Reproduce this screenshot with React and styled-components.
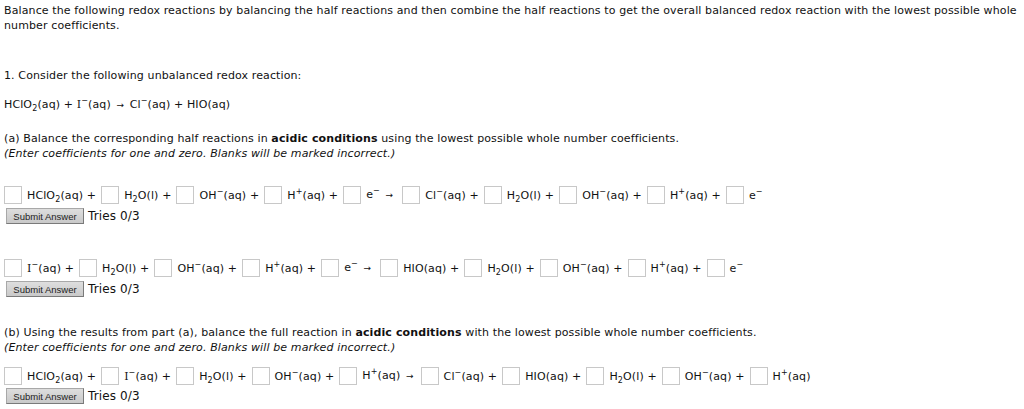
import React from 'react'
import styled, { createGlobalStyle } from 'styled-components'

const Global = createGlobalStyle`
    body {
        margin: 0;
        background: #fff;
    }
`

const Page = styled.div`
    padding: 3px 4px;
    font-family: "DejaVu Sans", Verdana, sans-serif;
    font-size: 11px;
    letter-spacing: 0.12px;
    line-height: 15px;
    color: #111;
`

const Para = styled.p`
    margin: ${({ $top }) => $top || 0}px 0 0;
    em {
        font-style: italic;
        display: block;
    }
    b {
        font-weight: bold;
    }
`

const Row = styled.div`
    display: flex;
    align-items: center;
    gap: 5px;
    margin-top: ${({ $top }) => $top || 0}px;
    height: 18px;
    white-space: nowrap;
`

const Box = styled.span`
    display: inline-block;
    width: 16px;
    height: 16px;
    border: 1px solid #c8c8c8;
    background: #fff;
    flex: none;
`

const Term = styled.span`
    sub, sup {
        font-size: 8px;
        line-height: 0;
    }
`

const SerifI = styled.span`
    font-family: "DejaVu Serif", serif;
`

const Arrow = styled.span`
    font-size: 9px;
    margin: 0 ${({ $after }) => $after || 2}px 0 2px;
`

const SubmitRow = styled.div`
    display: flex;
    align-items: center;
    gap: 4px;
    margin-top: ${({ $top }) => $top || 0}px;
`

const Button = styled.button`
    width: 78px;
    height: 16px;
    padding: 0;
    margin-left: 2px;
    font-family: "Liberation Sans", Arial, sans-serif;
    font-size: 9.5px;
    letter-spacing: 0;
    color: #222;
    background: linear-gradient(#dedede, #c9c9c9);
    border: 1px solid #a8a8a8;
    border-right-color: #7a7a7a;
    border-bottom-color: #7a7a7a;
`

const Tries = styled.span`
    font-size: 12px;
`

const minus = <sup>−</sup>
const plus = <sup>+</sup>

const rowA1 = [
    <>HClO<sub>2</sub>(aq) +</>,
    <>H<sub>2</sub>O(l) +</>,
    <>OH{minus}(aq) +</>,
    <>H{plus}(aq) +</>,
    <>e{minus} <Arrow $after={4}>→</Arrow></>,
    <>Cl{minus}(aq) +</>,
    <>H<sub>2</sub>O(l) +</>,
    <>OH{minus}(aq) +</>,
    <>H{plus}(aq) +</>,
    <>e{minus}</>,
]

const rowA2 = [
    <><SerifI>I</SerifI>{minus}(aq) +</>,
    <>H<sub>2</sub>O(l) +</>,
    <>OH{minus}(aq) +</>,
    <>H{plus}(aq) +</>,
    <>e{minus} <Arrow $after={4}>→</Arrow></>,
    <>HIO(aq) +</>,
    <>H<sub>2</sub>O(l) +</>,
    <>OH{minus}(aq) +</>,
    <>H{plus}(aq) +</>,
    <>e{minus}</>,
]

const rowB = [
    <>HClO<sub>2</sub>(aq) +</>,
    <><SerifI>I</SerifI>{minus}(aq) +</>,
    <>H<sub>2</sub>O(l) +</>,
    <>OH{minus}(aq) +</>,
    <>H{plus}(aq) <Arrow>→</Arrow></>,
    <>Cl{minus}(aq) +</>,
    <>HIO(aq) +</>,
    <>H<sub>2</sub>O(l) +</>,
    <>OH{minus}(aq) +</>,
    <>H{plus}(aq)</>,
]

function Equation({ terms, top }) {
    return (
        <Row $top={top}>
            {terms.map((t, i) => (
                <React.Fragment key={i}>
                    <Box />
                    <Term>{t}</Term>
                </React.Fragment>
            ))}
        </Row>
    )
}

function Submit({ top }) {
    return (
        <SubmitRow $top={top}>
            <Button>Submit Answer</Button>
            <Tries>Tries 0/3</Tries>
        </SubmitRow>
    )
}

export default function App() {
    return (
        <Page>
            <Global />
            <Para>
                Balance the following redox reactions by balancing the half reactions and then combine the half reactions to get the overall balanced redox reaction with the lowest possible whole number coefficients.
            </Para>
            <Para $top={35}>1. Consider the following unbalanced redox reaction:</Para>
            <Para $top={14}>
                <Term>HClO<sub>2</sub>(aq) + <SerifI>I</SerifI>{minus}(aq) <Arrow>→</Arrow> Cl{minus}(aq) + HIO(aq)</Term>
            </Para>
            <Para $top={18}>
                (a) Balance the corresponding half reactions in <b>acidic conditions</b> using the lowest possible whole number coefficients.
                <em>(Enter coefficients for one and zero. Blanks will be marked incorrect.)</em>
            </Para>
            <Equation terms={rowA1} top={25} />
            <Submit top={4} />
            <Equation terms={rowA2} top={35} />
            <Submit top={4} />
            <Para $top={28}>
                (b) Using the results from part (a), balance the full reaction in <b>acidic conditions</b> with the lowest possible whole number coefficients.
                <em>(Enter coefficients for one and zero. Blanks will be marked incorrect.)</em>
            </Para>
            <Equation terms={rowB} top={12} />
            <Submit top={3} />
        </Page>
    )
}
